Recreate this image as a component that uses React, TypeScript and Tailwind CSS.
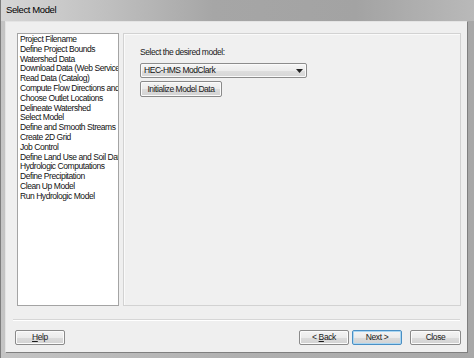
import React from "react";

const FONT = { fontFamily: '"Liberation Sans", Arial, sans-serif' };

const items = [
  "Project Filename",
  "Define Project Bounds",
  "Watershed Data",
  "Download Data (Web Services)",
  "Read Data (Catalog)",
  "Compute Flow Directions and Accumulation",
  "Choose Outlet Locations",
  "Delineate Watershed",
  "Select Model",
  "Define and Smooth Streams",
  "Create 2D Grid",
  "Job Control",
  "Define Land Use and Soil Data",
  "Hydrologic Computations",
  "Define Precipitation",
  "Clean Up Model",
  "Run Hydrologic Model",
];

function Btn({ children, w, def }: { children: React.ReactNode; w: string; def?: boolean }) {
  return (
    <div
      className={`${w} h-[15px] flex items-center justify-center rounded-[2px] border text-[8.5px] tracking-[-0.4px] leading-none whitespace-nowrap text-[#1a1a1a] bg-[linear-gradient(to_bottom,#f4f4f4,#ebebeb_50%,#dcdcdc_51%,#d2d2d2)] ${
        def ? "border-[#4a8fc4] shadow-[inset_0_0_0_1px_#a9d6f2]" : "border-[#8a8a8a] shadow-[inset_0_0_0_1px_#fbfbfb]"
      }`}
    >
      {children}
    </div>
  );
}

export default function App() {
  return (
    <div
      className="w-[474px] h-[358px] flex flex-col bg-[#b3b3b3] overflow-hidden border-l border-[#7d7d7d]"
      style={FONT}
    >
      <div className="h-[21px] shrink-0 flex items-center pl-[5px] text-[9.5px] tracking-[-0.4px] text-black bg-[linear-gradient(to_right,#d6d6d6,#c2c2c2_20%,#a6a6a6_45%,#a3a3a3_75%,#b9b9b9)]">
        Select Model
      </div>
      <div className="flex-1 flex pl-[4px] pr-[7px] pb-[6px] bg-[linear-gradient(to_right,#c4c4c4,#b0b0b0_50%,#a8a8a8)]">
        <div className="flex-1 flex flex-col bg-[#efefef] border-t border-l border-[#e4e4e4] shadow-[1px_1px_0_#7f7f7f]">
          <div className="flex pt-[11px] pl-[11px] pr-[6px] gap-[4px]">
            <div className="w-[102px] h-[273px] shrink-0 bg-white border border-[#a4a4a4] overflow-hidden">
              <div className="pl-[2px] pt-[1px] text-[8.5px] tracking-[-0.45px] leading-[9.8px] text-[#111] whitespace-nowrap">
                {items.map((t) => (
                  <div key={t}>{t}</div>
                ))}
              </div>
            </div>
            <div className="flex-1 h-[273px] border border-[#d2d2d2] shadow-[inset_1px_1px_0_#fafafa] bg-[#f0f0f0] pl-[16px] pt-[13px] flex flex-col">
              <div className="text-[8.5px] tracking-[-0.45px] leading-[11px] text-[#1a1a1a] whitespace-nowrap">
                Select the desired model:
              </div>
              <div className="mt-[5px] w-[167px] h-[15px] flex items-center justify-between rounded-[2px] border border-[#8c8c8c] shadow-[inset_0_0_0_1px_#fafafa] bg-[linear-gradient(to_bottom,#f5f5f5,#ececec_50%,#dedede_51%,#d6d6d6)] pl-[3px] pr-[3px]">
                <span className="text-[8.5px] tracking-[-0.45px] leading-none text-[#111] whitespace-nowrap">
                  HEC-HMS ModClark
                </span>
                <svg width="7" height="4" viewBox="0 0 7 4">
                  <path d="M0 0H7L3.5 4Z" fill="#222" />
                </svg>
              </div>
              <div className="mt-[3px]">
                <div className="w-[82px] h-[16px] flex items-center justify-center rounded-[2px] border border-[#8a8a8a] shadow-[inset_0_0_0_1px_#fbfbfb] text-[8.5px] tracking-[-0.45px] leading-none whitespace-nowrap text-[#1a1a1a] bg-[linear-gradient(to_bottom,#f4f4f4,#ebebeb_50%,#dcdcdc_51%,#d2d2d2)]">
                  Initialize Model Data
                </div>
              </div>
            </div>
          </div>
          <div className="mt-[13px] mx-[7px] h-[2px] border-t border-[#d6d6d6] border-b border-b-white" />
          <div className="mt-[9px] flex items-center pl-[9px] pr-[6px]">
            <Btn w="w-[50px]">
              <span>
                <span className="underline">H</span>elp
              </span>
            </Btn>
            <div className="flex-1" />
            <Btn w="w-[50px]">
              <span>
                &lt; <span className="underline">B</span>ack
              </span>
            </Btn>
            <div className="w-[3px]" />
            <Btn w="w-[50px]" def>
              <span>Next &gt;</span>
            </Btn>
            <div className="w-[8px]" />
            <Btn w="w-[51px]">
              <span>Close</span>
            </Btn>
          </div>
        </div>
      </div>
    </div>
  );
}
